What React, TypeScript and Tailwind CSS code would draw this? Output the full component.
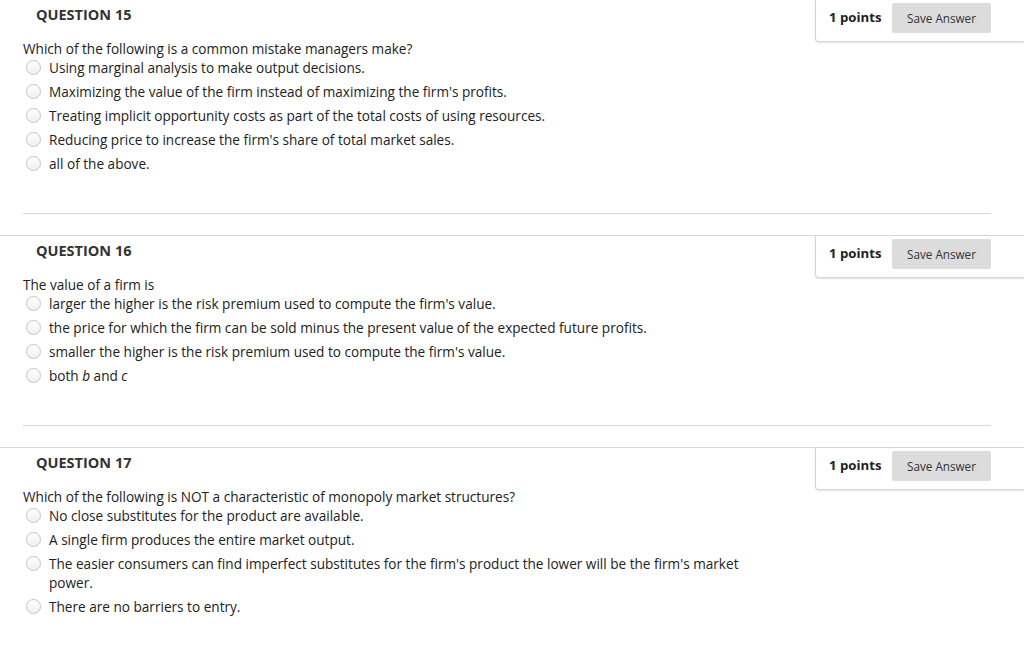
import type { ReactNode } from "react";

type Question = {
  num: number;
  text: string;
  options: ReactNode[];
};

const questions: Question[] = [
  {
    num: 15,
    text: "Which of the following is a common mistake managers make?",
    options: [
      "Using marginal analysis to make output decisions.",
      "Maximizing the value of the firm instead of maximizing the firm's profits.",
      "Treating implicit opportunity costs as part of the total costs of using resources.",
      "Reducing price to increase the firm's share of total market sales.",
      "all of the above.",
    ],
  },
  {
    num: 16,
    text: "The value of a firm is",
    options: [
      "larger the higher is the risk premium used to compute the firm's value.",
      "the price for which the firm can be sold minus the present value of the expected future profits.",
      "smaller the higher is the risk premium used to compute the firm's value.",
      <>
        both <i>b</i> and <i>c</i>
      </>,
    ],
  },
  {
    num: 17,
    text: "Which of the following is NOT a characteristic of monopoly market structures?",
    options: [
      "No close substitutes for the product are available.",
      "A single firm produces the entire market output.",
      "The easier consumers can find imperfect substitutes for the firm's product the lower will be the firm's market power.",
      "There are no barriers to entry.",
    ],
  },
];

function Radio() {
  return (
    <span className="mt-[2px] h-[15px] w-[15px] flex-shrink-0 rounded-full border border-[#c4c4c4] bg-gradient-to-b from-white to-[#f0f0f0]" />
  );
}

function QuestionBlock({ q, first }: { q: Question; first: boolean }) {
  return (
    <div className={first ? "-mt-px" : "mt-[21px]"}>
      {/* header */}
      <div className="flex items-start justify-between border-t border-[#d6d6d6]">
        <div className="pl-[36px] pt-[5px] text-[14.5px] font-bold leading-[20px] text-[#333]">
          QUESTION {q.num}
        </div>
        <div className="flex h-[42px] w-[209px] items-start rounded-bl-[4px] border-b border-l border-[#d6d6d6] bg-white pl-[13px] pr-[33px] pt-[3px] shadow-[0_1px_2px_rgba(0,0,0,0.12)]">
          <span className="mt-[5px] text-[13.2px] font-bold leading-[18px] text-[#222]">1 points</span>
          <button className="ml-auto h-[30px] w-[99px] rounded-[2px] bg-[#dcdcdc] text-[11.7px] leading-[30px] text-[#333]">
            Save Answer
          </button>
        </div>
      </div>

      {/* body */}
      <div className="px-[23px]">
        <div className="-mt-[2px] text-[13.6px] leading-[18px] text-[#222]">{q.text}</div>
        <div className="flex flex-col gap-[5px]">
          {q.options.map((o, i) => (
            <div key={i} className="flex items-start gap-[8px] pl-[3px]">
              <Radio />
              <span className="max-w-[700px] text-[13.6px] leading-[19px] text-[#222]">{o}</span>
            </div>
          ))}
        </div>
        <div className="mr-[10px] mt-[40px] border-t border-[#d6d6d6]" />
      </div>
    </div>
  );
}

export default function App() {
  return (
    <div
      className="h-[651px] w-[1024px] overflow-hidden bg-white"
      style={{ fontFamily: "'Open Sans', 'Noto Sans', sans-serif" }}
    >
      {questions.map((q, i) => (
        <QuestionBlock key={q.num} q={q} first={i === 0} />
      ))}
    </div>
  );
}
